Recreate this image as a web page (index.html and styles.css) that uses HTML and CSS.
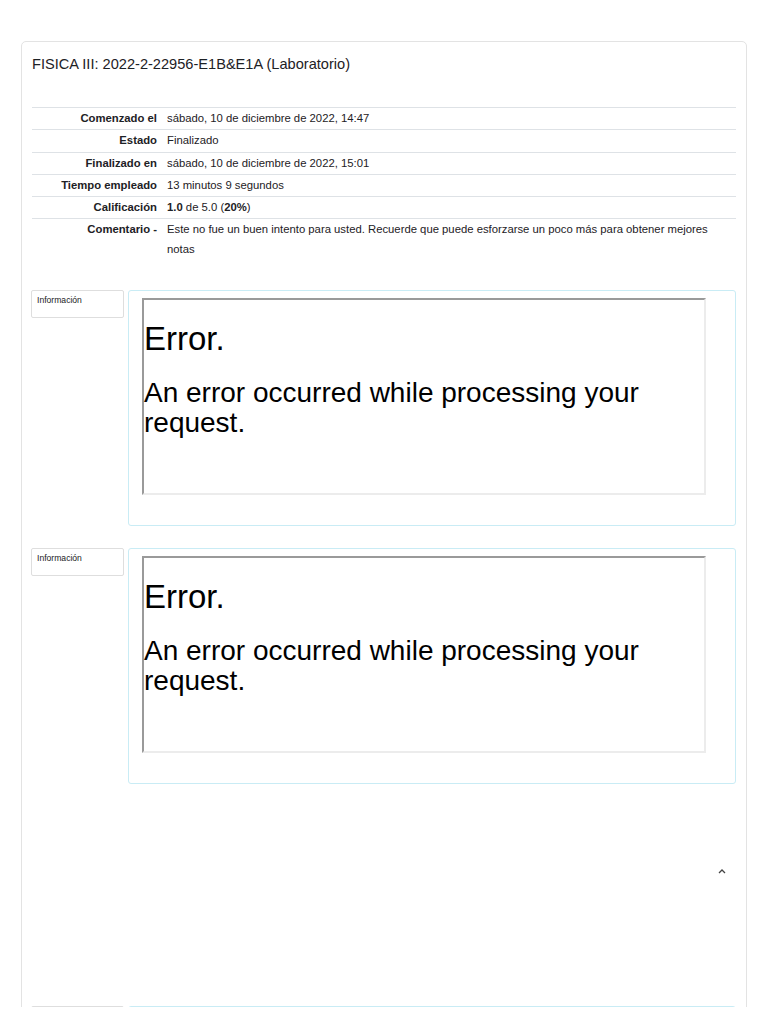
FILE: index.html
```html
<!DOCTYPE html>
<html lang="es">
<head>
<meta charset="utf-8">
<title>FISICA III</title>
<link rel="stylesheet" href="styles.css">
</head>
<body>
<div class="page">
<div class="card">
  <h2 class="title">FISICA III: 2022-2-22956-E1B&amp;E1A (Laboratorio)</h2>
  <table class="summary">
    <tr><th>Comenzado el</th><td>sábado, 10 de diciembre de 2022, 14:47</td></tr>
    <tr><th>Estado</th><td>Finalizado</td></tr>
    <tr><th>Finalizado en</th><td>sábado, 10 de diciembre de 2022, 15:01</td></tr>
    <tr><th>Tiempo empleado</th><td>13 minutos 9 segundos</td></tr>
    <tr><th>Calificación</th><td><b>1.0</b> de 5.0 (<b>20%</b>)</td></tr>
    <tr><th>Comentario -</th><td>Este no fue un buen intento para usted. Recuerde que puede esforzarse un poco más para obtener mejores notas</td></tr>
  </table>

  <div class="question">
    <div class="info">Información</div>
    <div class="content">
      <div class="frame">
        <h1 class="err-title">Error.</h1>
        <p class="err-text">An error occurred while processing your request.</p>
      </div>
    </div>
  </div>

  <div class="question">
    <div class="info">Información</div>
    <div class="content">
      <div class="frame">
        <h1 class="err-title">Error.</h1>
        <p class="err-text">An error occurred while processing your request.</p>
      </div>
    </div>
  </div>

  <div class="spacer">
    <svg class="caret" width="8" height="6" viewBox="0 0 8 6"><polyline points="1,5 4,2 7,5" fill="none" stroke="#444" stroke-width="1.3"/></svg>
  </div>

  <div class="question question-cut">
    <div class="info"></div>
    <div class="content"></div>
  </div>
</div>
</div>
</body>
</html>
```

FILE: styles.css
```css
html, body {
  margin: 0;
  padding: 0;
  background: #fff;
}
body {
  font-family: "Liberation Sans", Arial, sans-serif;
  color: #1d2125;
}
.page {
  height: 1007px;
  overflow: hidden;
}
.card {
  margin: 41px 21px 0 21px;
  border: 1px solid #e3e3e3;
  border-radius: 5px;
  padding: 13.5px 10px 40px 10px;
}
.title {
  margin: 0;
  font-size: 14.6px;
  line-height: 17px;
  font-weight: normal;
  color: #1d2125;
}
.summary {
  width: 100%;
  border-collapse: collapse;
  margin-top: 34.5px;
  font-size: 11.3px;
  line-height: 19.3px;
}
.summary th,
.summary td {
  border-top: 1px solid #dee2e6;
  padding: 1px 5px 1px 5px;
  vertical-align: top;
}
.summary tr:last-child th,
.summary tr:last-child td {
  padding-bottom: 2px;
}
.summary th {
  width: 120px;
  text-align: right;
  font-weight: bold;
  white-space: nowrap;
}
.summary td {
  text-align: left;
}
.question {
  display: flex;
  gap: 4px;
  margin-top: 29px;
}
.question + .question {
  margin-top: 22px;
}
.info {
  width: 86px;
  height: 22px;
  flex: none;
  margin-left: -1px;
  border: 1px solid #dedede;
  border-radius: 2px;
  padding: 4px 0 0 5px;
  font-size: 8.6px;
  line-height: 10px;
  color: #222;
}
.content {
  flex: 1;
  border: 1px solid #c9ecf5;
  border-radius: 3px;
  padding: 7px 29px 30px 13px;
}
.frame {
  height: 193px;
  border-style: solid;
  border-width: 2px;
  border-color: #9a9a9a #ececec #ececec #9a9a9a;
  padding: 0;
  color: #000;
}
.err-title {
  margin: 19.6px 0 0 0;
  font-size: 33px;
  line-height: 38px;
  font-weight: normal;
}
.err-text {
  margin: 20.7px 0 0 0;
  font-size: 28px;
  line-height: 30px;
}
.spacer {
  height: 222px;
  position: relative;
}
.question-cut {
  margin-top: 0;
}
.question-cut .content {
  height: 200px;
}
.caret {
  position: absolute;
  left: 686px;
  top: 84px;
}
```
